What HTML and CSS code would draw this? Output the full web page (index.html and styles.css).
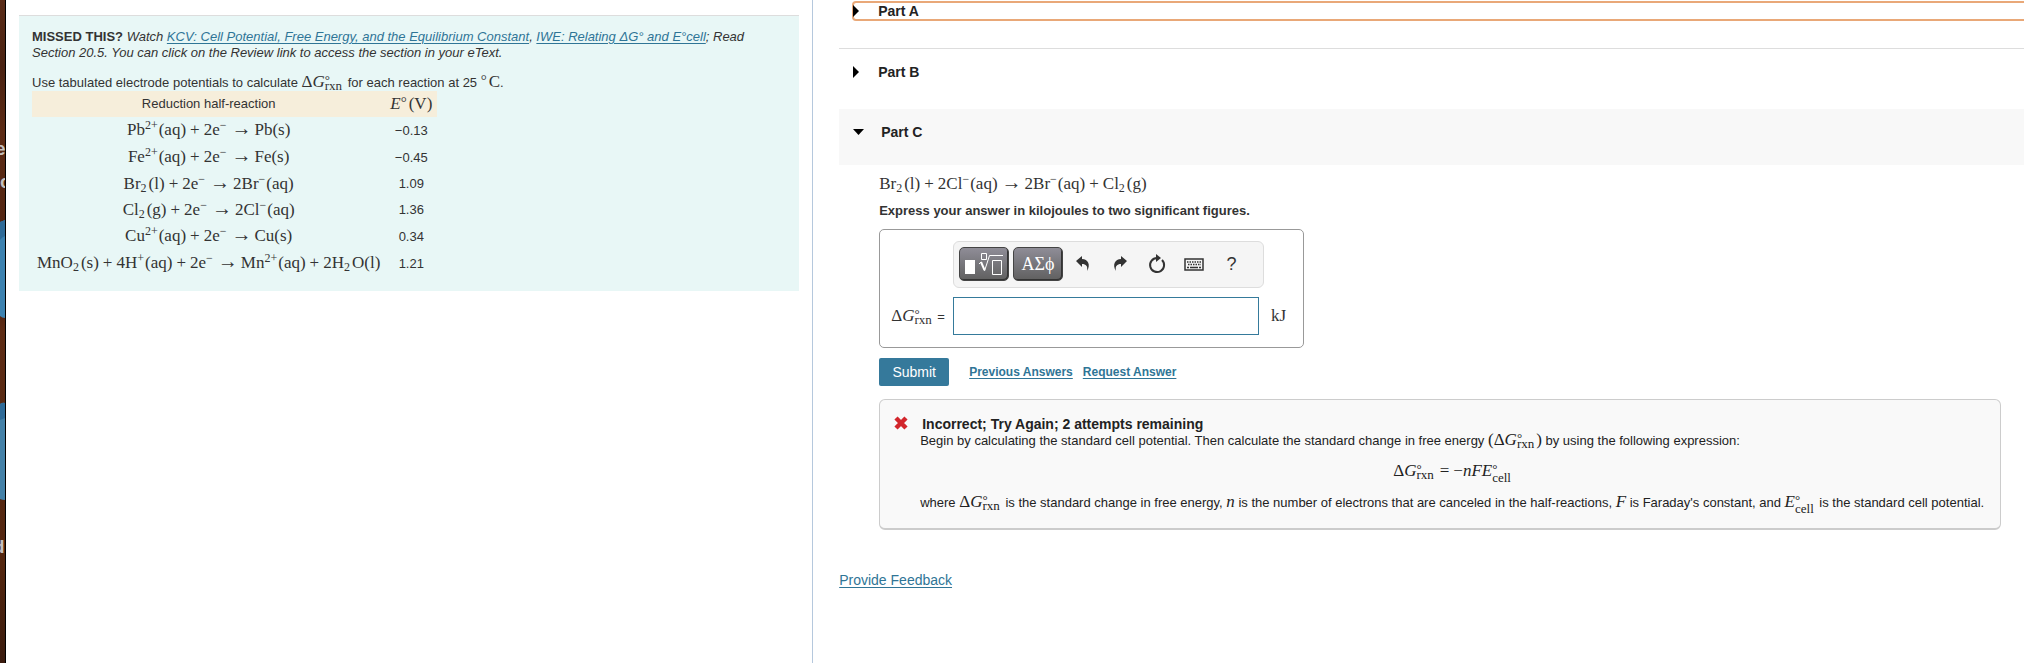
FILE: index.html
```html
<!DOCTYPE html>
<html lang="en">
<head>
<meta charset="utf-8">
<title>Standard Free Energy Change</title>
<link rel="stylesheet" href="styles.css">
</head>
<body>
<div class="desktop" aria-hidden="true">
  <svg class="desktop-art" width="5" height="663">
    <defs>
      <linearGradient id="wood" x1="0" y1="0" x2="0" y2="1">
        <stop offset="0" stop-color="#5a2c18"/><stop offset=".1" stop-color="#4a2212"/>
        <stop offset=".2" stop-color="#5c2b15"/><stop offset=".45" stop-color="#4c2110"/>
        <stop offset=".5" stop-color="#5e2c15"/><stop offset=".7" stop-color="#552812"/>
        <stop offset=".85" stop-color="#54260f"/><stop offset="1" stop-color="#3a1b0e"/>
      </linearGradient>
    </defs>
    <rect width="5" height="663" fill="url(#wood)"/>
    <path d="M0 222Q3 221 5 220V318Q2 318 0 316Z" fill="#3d82b0"/>
    <path d="M0 222Q3 221 5 220V236Q2 237 0 240Z" fill="#2f6b98"/>
    <path d="M0 404Q3 402 5 403V500Q2 500 0 499Z" fill="#4481a8"/>
    <path d="M0 404Q3 402 5 403V418L0 420Z" fill="#2f6b98"/>
    <text class="desktop-label" x="-5" y="155">e</text>
    <text class="desktop-label" x="0" y="188">c</text>
    <text class="desktop-label" x="-7" y="553">d</text>
  </svg>
</div>
<main class="layout">
  <section class="intro">
    <div class="problem">
      <p class="missed"><b>MISSED THIS?</b> <i>Watch <a href="#">KCV: Cell Potential, Free Energy, and the Equilibrium Constant</a>, <a href="#">IWE: Relating ΔG° and E°cell</a>; Read Section 20.5. You can click on the Review link to access the section in your eText.</i></p>
      <p class="prompt">Use tabulated electrode potentials to calculate <span class="m">Δ<i>G</i><span class="stack"><span>°</span><span>rxn</span></span></span> for each reaction at 25 <span class="m"><sup class="degree">°</sup>C</span>.</p>
      <table class="potentials">
        <thead><tr><th scope="col">Reduction half-reaction</th><th scope="col"><span class="m"><i>E</i><sup class="degree">°</sup>(V)</span></th></tr></thead>
        <tbody>
          <tr class="tall"><td><span class="m">Pb<sup>2+</sup>(aq)<span class="op">+</span>2e<sup>−</sup><span class="arrow">→</span>Pb(s)</span></td><td>−0.13</td></tr>
          <tr class="tall"><td><span class="m">Fe<sup>2+</sup>(aq)<span class="op">+</span>2e<sup>−</sup><span class="arrow">→</span>Fe(s)</span></td><td>−0.45</td></tr>
          <tr><td><span class="m">Br<sub>2</sub>(l)<span class="op">+</span>2e<sup>−</sup><span class="arrow">→</span>2Br<sup>−</sup>(aq)</span></td><td>1.09</td></tr>
          <tr><td><span class="m">Cl<sub>2</sub>(g)<span class="op">+</span>2e<sup>−</sup><span class="arrow">→</span>2Cl<sup>−</sup>(aq)</span></td><td>1.36</td></tr>
          <tr class="tall"><td><span class="m">Cu<sup>2+</sup>(aq)<span class="op">+</span>2e<sup>−</sup><span class="arrow">→</span>Cu(s)</span></td><td>0.34</td></tr>
          <tr class="tall"><td><span class="m">MnO<sub>2</sub>(s)<span class="op">+</span>4H<sup>+</sup>(aq)<span class="op">+</span>2e<sup>−</sup><span class="arrow">→</span>Mn<sup>2+</sup>(aq)<span class="op">+</span>2H<sub>2</sub>O(l)</span></td><td>1.21</td></tr>
        </tbody>
      </table>
    </div>
  </section>
  <section class="parts">
    <div class="part-a">
      <button class="part focused" type="button"><svg width="6" height="12"><path d="M0 0L6 6L0 12Z"/></svg>Part A</button>
    </div>
    <div class="part-b">
      <button class="part" type="button"><svg width="6" height="12"><path d="M0 0L6 6L0 12Z"/></svg>Part B</button>
    </div>
    <div class="part-c">
      <button class="part open" type="button" aria-expanded="true"><svg width="11" height="6"><path d="M0 0H11L5.500 6Z"/></svg>Part C</button>
    </div>
    <div class="answer">
      <p class="equation"><span class="m">Br<sub>2</sub>(l)<span class="op">+</span>2Cl<sup>−</sup>(aq)<span class="arrow">→</span>2Br<sup>−</sup>(aq)<span class="op">+</span>Cl<sub>2</sub>(g)</span></p>
      <p class="express">Express your answer in kilojoules to two significant figures.</p>
      <form class="entry">
        <label class="entry-label" for="dg"><span class="m">Δ<i>G</i><span class="stack"><span>°</span><span>rxn</span></span></span> =</label>
        <div class="toolbar">
          <button class="key" type="button" aria-label="Templates"><svg width="40" height="26" fill="none" stroke="#fff"><path d="M1 9H11V23H1Z" fill="#fff" stroke="none"/><path d="M17.500 2.500H22.500V8.500H17.500Z"/><path d="M15 13L17 11" /><path d="M17 11L20.500 19" stroke-width="2"/><path d="M20.500 20L25.500 4.500H39"/><path d="M28.500 9.500H37.500V23.500H28.500Z"/></svg></button>
          <button class="key" type="button">ΑΣϕ</button>
          <button class="tool" type="button" aria-label="Undo"><svg width="16" height="18" viewBox="0 0 16 18"><path d="M1 6L7 1V4C13 4 16 10 12 16C13 11 11 9 7 9V12Z"/></svg></button>
          <button class="tool" type="button" aria-label="Redo"><svg width="16" height="18" viewBox="0 0 16 18"><path d="M15 6L9 1V4C3 4 0 10 4 16C3 11 5 9 9 9V12Z"/></svg></button>
          <button class="tool" type="button" aria-label="Reset"><svg width="18" height="20" viewBox="0 0 18 20"><path d="M9 4A7 7 0 1 0 14 6" fill="none" stroke="#333" stroke-width="2"/><path d="M8 0L13 4L8 8Z"/></svg></button>
          <button class="tool" type="button" aria-label="Keyboard"><svg width="20" height="13" viewBox="0 0 20 13" fill="none" stroke="#333"><path d="M1 1H19V12H1Z" stroke-width="1.500"/><path d="M3 4H17" stroke-width="1.500" stroke-dasharray="1.500 1"/><path d="M4 6.500H17" stroke-width="1.500" stroke-dasharray="1.500 1"/><path d="M3 9.500H5M6 9.500H14M15 9.500H17" stroke-width="1.500"/></svg></button>
          <button class="tool help" type="button">?</button>
        </div>
        <input class="entry-input" id="dg" type="text">
        <span class="m unit">kJ</span>
      </form>
      <div class="actions">
        <button class="submit" type="button">Submit</button>
        <a href="#">Previous Answers</a>
        <a href="#">Request Answer</a>
      </div>
      <div class="feedback">
        <svg class="wrong" width="14" height="14" viewBox="0 0 14 14"><path d="M2 2L12 12M12 2L2 12" stroke="#d2262c" stroke-width="4.500"/></svg>
        <div class="feedback-body">
          <h2 class="feedback-title">Incorrect; Try Again; 2 attempts remaining</h2>
          <p>Begin by calculating the standard cell potential. Then calculate the standard change in free energy <span class="m">(Δ<i>G</i><span class="stack"><span>°</span><span>rxn</span></span>)</span> by using the following expression:</p>
          <p class="formula"><span class="m">Δ<i>G</i><span class="stack"><span>°</span><span>rxn</span></span><span class="op">=</span>−<i>nFE</i><span class="stack low"><span>°</span><span>cell</span></span></span></p>
          <p>where <span class="m">Δ<i>G</i><span class="stack"><span>°</span><span>rxn</span></span></span> is the standard change in free energy, <span class="m"><i>n</i></span> is the number of electrons that are canceled in the half-reactions, <span class="m"><i>F</i></span> is Faraday's constant, and <span class="m"><i>E</i><span class="stack low"><span>°</span><span>cell</span></span></span> is the standard cell potential.</p>
        </div>
      </div>
    </div>
    <a class="provide" href="#">Provide Feedback</a>
  </section>
</main>
</body>
</html>
```
FILE: styles.css
```css
* { box-sizing: border-box; }
body {
  margin: 0;
  display: flex;
  min-height: 100vh;
  overflow: hidden;
  background: #fff;
  color: #333;
  font: 13px/16px "Liberation Sans", Arial, sans-serif;
}
p, h2 { margin: 0; }
a { color: #2f7596; text-underline-offset: 2px; }
button { font: inherit; color: inherit; padding: 0; border: 0; background: none; }
svg { display: block; flex: none; }

.desktop { flex: none; width: 6px; border-right: 1px solid #000; background: #4c2110; overflow: hidden; }
.desktop-label { font: bold 19px "Liberation Sans", Arial, sans-serif; fill: #c4c0be; }

.layout { flex: 1; min-width: 0; display: grid; grid-template-columns: 2fr 3fr; }
.intro { border-right: 1px solid #b5c8dd; padding: 15px 13px; }
.problem { background: #e8f7f6; border-top: 1px solid #ddd; padding: 13px 13px 14px; }
.missed { padding-right: 24px; }
.prompt { margin-top: 13px; line-height: 16px; }

.m { font: 17px/16px "Liberation Serif", "Times New Roman", serif; white-space: nowrap; }
.m sup, .m sub { font-size: 12px; line-height: 0; }
.m sup { vertical-align: 6px; margin-right: 1px; }
.m sub { vertical-align: -3px; margin-right: 2px; }
.m .degree { font-size: 15px; vertical-align: 2px; margin-right: 2px; }
.op { margin: 0 4px; }
.arrow { margin: 0 3px 0 4px; font-size: 20px; line-height: 0; }
.stack { display: inline-block; padding-right: 2px; vertical-align: -3px; font-size: 13px; line-height: 6px; text-align: left; }
.stack span { display: block; }
.stack.low { line-height: 9px; vertical-align: -6px; }

.potentials { border-collapse: collapse; }
.potentials th, .potentials td { height: 26px; padding: 0 5px; text-align: center; font-weight: normal; line-height: 16px; }
.potentials .tall td { height: 27px; }
.potentials th { background: #f6eedb; }

.parts { padding: 1px 0 0 26px; min-width: 0; }
.part { display: flex; align-items: center; gap: 19px; width: 100%; height: 20px; padding-left: 14px; font-size: 14px; font-weight: bold; text-align: left; color: #222; }
.part-a { padding-left: 13px; height: 47px; margin-right: -8px; }
.part.focused { padding-left: 1px; box-shadow: inset 0 0 0 2px #e9a878; border-radius: 4px; }
.part-b { border-top: 1px solid #ddd; padding-top: 13px; height: 61px; }
.part-c { background: #f8f8f8; padding-top: 13px; height: 56px; }
.part.open { gap: 17px; }

.answer { padding: 11px 23px 0 40px; }
.equation { line-height: 16px; }
.express { margin: 10px 0; font-weight: bold; }
.entry {
  display: grid;
  width: fit-content;
  grid-template-columns: auto 306px auto;
  row-gap: 9px;
  align-items: center;
  border: 1px solid #999;
  border-radius: 5px;
  padding: 11px 17px 12px 11px;
}
.toolbar { grid-column: 2 / 4; grid-row: 1; justify-self: start; display: flex; align-items: center; height: 47px; width: 311px; gap: 4px; padding: 0 5px 1px; border: 1px solid #ddd; border-radius: 6px; background: #f5f5f5; }
.key { display: grid; place-items: center; width: 50px; height: 34px; border: 1px solid #444; border-radius: 5px; background: linear-gradient(#8f8d97, #606060); color: #fff; font: 18px "Liberation Serif", serif; box-shadow: inset -1px -1px 0 #333; }
.tool { display: grid; place-items: center; width: 33px; height: 34px; fill: #333; }
.help { font-size: 18px; }
.entry-label { grid-column: 1; grid-row: 2; padding-right: 8px; }
.entry-input { grid-column: 2; grid-row: 2; width: 100%; height: 38px; border: 1px solid #357a9b; border-radius: 0; background: #fff; font: inherit; }
.unit { grid-column: 3; grid-row: 2; padding-left: 12px; }

.actions { display: flex; align-items: center; gap: 10px; margin-top: 10px; font-size: 12px; font-weight: bold; }
.submit { width: 70px; height: 28px; margin-right: 10px; border-radius: 2px; background: #35799b; color: #fff; font-size: 14px; font-weight: normal; }

.feedback { display: flex; gap: 12px; margin-top: 13px; padding: 16px 14px 15px; border: 1px solid #ccc; border-width: 1px 1px 2px; border-radius: 6px; background: #f9f9f9; color: #222; }
.feedback-body { flex: 1; min-width: 0; }
.feedback-title { margin-left: 2px; font-size: 14px; line-height: 16px; }
.formula { margin: 14px 0 12px; text-align: center; }
.provide { display: inline-block; margin-top: 42px; font-size: 14px; }
```
